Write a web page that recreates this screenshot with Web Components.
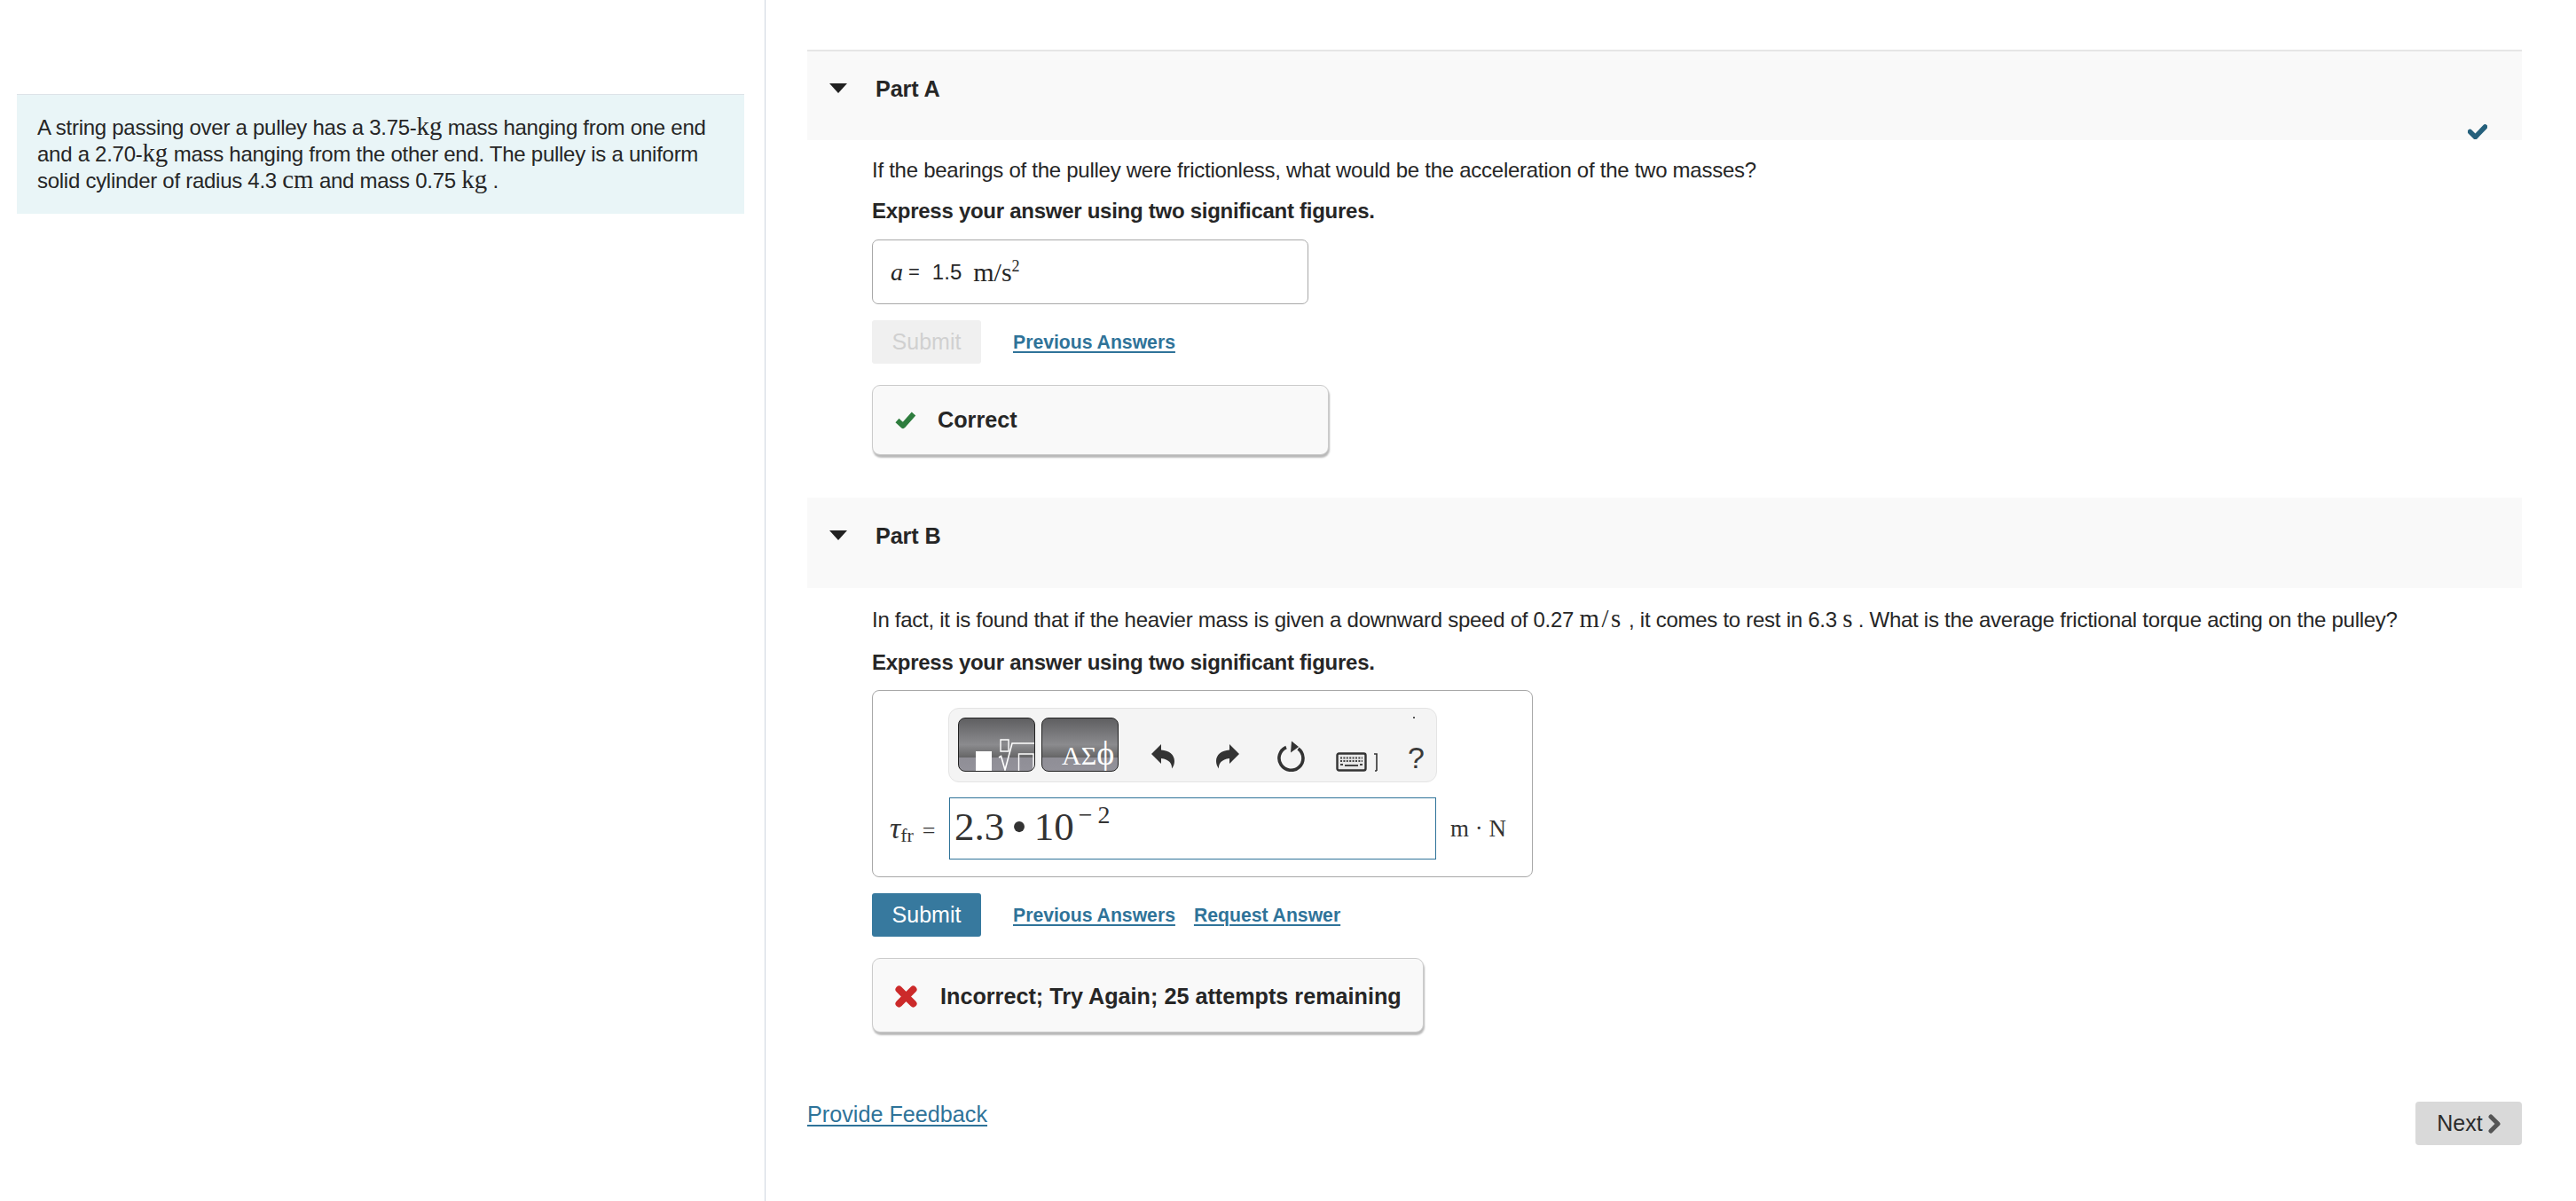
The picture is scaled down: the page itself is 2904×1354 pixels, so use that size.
<!DOCTYPE html>
<html lang="en">
<head>
<meta charset="utf-8">
<title>Part A and Part B</title>
<style>
  html, body { margin: 0; background: #fff; }
  body { font-family: "Liberation Sans", Arial, sans-serif; font-size: 24px; color: #262626; overflow: hidden; }
  x-statement div { white-space: nowrap; }
</style>
</head>
<body>
<x-app>
  <x-statement slot="side">
    <div>A string passing over a pulley has a 3.75-<x-unit>kg</x-unit> mass hanging from one end</div>
    <div>and a 2.70-<x-unit>kg</x-unit> mass hanging from the other end. The pulley is a uniform</div>
    <div>solid cylinder of radius 4.3 <x-unit>cm</x-unit> and mass 0.75 <x-unit>kg</x-unit> .</div>
  </x-statement>

  <x-part title="Part A" done>
    <x-question>If the bearings of the pulley were frictionless, what would be the acceleration of the two masses?</x-question>
    <x-answer-box></x-answer-box>
    <x-actions disabled></x-actions>
    <x-feedback kind="correct" style="width:515px">Correct</x-feedback>
  </x-part>

  <x-part title="Part B" style="margin-top:48px">
    <x-question style="margin-top:1px;--hint-gap:19px">In fact, it is found that if the heavier mass is given a downward speed of 0.27 <x-unit style="letter-spacing:2.5px">m/s</x-unit> , it comes to rest in 6.3 <x-unit>s</x-unit> . What is the average frictional torque acting on the pulley?</x-question>
    <x-math-editor></x-math-editor>
    <x-actions request></x-actions>
    <x-feedback kind="incorrect" style="width:622px;height:84px;padding-top:2px">Incorrect; Try Again; 25 attempts remaining</x-feedback>
  </x-part>

  <x-footer></x-footer>
</x-app>

<script>
class App extends HTMLElement {
    connectedCallback() {
        this.attachShadow({ mode: 'open' }).innerHTML = `
            <style>
                :host { display: grid; grid-template-columns: 863px 1fr; height: 1354px; }
                .side { border-right: 1px solid #cfd6e0; padding: 106px 23px 0 19px; }
                .main { padding: 56px 61px 0 47px; min-width: 0; }
            </style>
            <div class="side"><slot name="side"></slot></div>
            <div class="main"><slot></slot></div>`;
    }
}

class Statement extends HTMLElement {
    connectedCallback() {
        this.attachShadow({ mode: 'open' }).innerHTML = `
            <style>
                :host {
                    display: block;
                    box-sizing: border-box;
                    height: 135px;
                    background: #e9f5f7;
                    border-top: 1px solid #dde3e8;
                    padding: 21px 30px 0 23px;
                    font-size: 24px;
                    line-height: 29px;
                    letter-spacing: -0.27px;
                }
            </style>
            <slot></slot>`;
    }
}

class Unit extends HTMLElement {
    connectedCallback() {
        this.attachShadow({ mode: 'open' }).innerHTML = `<style>
                :host { display: inline; font-family: "Liberation Serif", "DejaVu Serif", serif; font-size: 1.2em; line-height: 1; letter-spacing: 0; }
            </style><slot></slot>`;
    }
}

class Part extends HTMLElement {
    connectedCallback() {
        const check = this.hasAttribute('done') ? `
            <svg class="check" width="22" height="17" viewBox="0 0 22 17"><path d="M2.5 8.5 L8.5 14.5 L19.5 3" fill="none" stroke="#25607c" stroke-width="5.5" stroke-linejoin="round" stroke-linecap="round"/></svg>` : '';
        this.attachShadow({ mode: 'open' }).innerHTML = `
            <style>
                :host { display: block; position: relative; }
                header {
                    display: flex;
                    align-items: center;
                    height: 102px;
                    box-sizing: border-box;
                    background: #f9f9f9;
                    padding: 0 0 16px 25px;
                    font-weight: 700;
                    font-size: 25.2px;
                    letter-spacing: -0.1px;
                }
                :host([done]) header { border-top: 2px solid #e6e6e6; }
                .tri { width: 0; height: 0; border-left: 10px solid transparent; border-right: 10px solid transparent; border-top: 11px solid #212121; margin: 0 32px 2px 0; }
                .check { position: absolute; left: 1872px; top: 84px; }
                .body { padding: 19px 0 0 73px; }
            </style>
            <header><span class="tri"></span><span>${this.getAttribute('title')}</span></header>
            ${check}
            <div class="body"><slot></slot></div>`;
    }
}

class Question extends HTMLElement {
    connectedCallback() {
        this.attachShadow({ mode: 'open' }).innerHTML = `
            <style>
                :host { display: block; font-size: 24px; line-height: 30px; white-space: nowrap; letter-spacing: -0.27px; }
                p { margin: 0; height: 30px; }
                .hint { font-weight: 700; margin-top: var(--hint-gap, 16px); }
            </style>
            <p><slot></slot></p>
            <p class="hint">Express your answer using two significant figures.</p>`;
    }
}

class AnswerBox extends HTMLElement {
    connectedCallback() {
        this.attachShadow({ mode: 'open' }).innerHTML = `
            <style>
                :host {
                    display: flex;
                    align-items: center;
                    box-sizing: border-box;
                    width: 492px;
                    height: 73px;
                    margin-top: 17px;
                    border: 1px solid #a8a8a8;
                    border-radius: 7px;
                    padding: 0 0 0 20px;
                    font-size: 24px;
                    white-space: nowrap;
                }
                i { font-family: "Liberation Serif", serif; font-size: 28px; }
                .eq { margin: 0 14px 0 6px; font-size: 22px; }
                .u { font-family: "Liberation Serif", serif; font-size: 30px; margin-left: 13px; }
                sup { font-size: 18px; line-height: 0; }
            </style>
            <i>a</i><span class="eq">=</span><span>1.5</span><span class="u">m/s<sup>2</sup></span>`;
    }
}

class Actions extends HTMLElement {
    connectedCallback() {
        const off = this.hasAttribute('disabled');
        const req = this.hasAttribute('request') ? '<a class="req" href="#">Request Answer</a>' : '';
        this.attachShadow({ mode: 'open' }).innerHTML = `
            <style>
                :host { display: flex; align-items: center; margin-top: 18px; }
                button {
                    width: 123px;
                    height: 49px;
                    border: 0;
                    border-radius: 3px;
                    background: #37799e;
                    color: #fff;
                    font: 25px "Liberation Sans", Arial, sans-serif;
                    padding: 0;
                }
                button[disabled] { background: #f0f0f0; color: #d0d0d0; }
                a { color: #2f7399; font-size: 21.2px; font-weight: 700; margin-left: 36px; text-underline-offset: 3px; text-decoration-thickness: 2px; }
                a.req { margin-left: 21px; }
            </style>
            <button ${off ? 'disabled' : ''}>Submit</button>
            <a href="#">Previous Answers</a>${req}`;
    }
}

class Feedback extends HTMLElement {
    connectedCallback() {
        const good = this.getAttribute('kind') === 'correct';
        const icon = good
            ? `<svg width="24" height="21" viewBox="0 0 24 21" style="margin-right:24px"><path d="M2.5 11 L9 17 L21 3.5" fill="none" stroke="#2e7d3e" stroke-width="6" stroke-linejoin="round"/></svg>`
            : `<svg width="25" height="25" viewBox="0 0 25 25" style="margin-right:26px"><path d="M4.5 4.5 L20.5 20.5 M20.5 4.5 L4.5 20.5" fill="none" stroke="#cc2a2a" stroke-width="8" stroke-linecap="round"/></svg>`;
        this.attachShadow({ mode: 'open' }).innerHTML = `
            <style>
                :host {
                    display: flex;
                    align-items: center;
                    box-sizing: border-box;
                    height: 79px;
                    margin-top: 24px;
                    padding-left: 25px;
                    background: #f9f9f9;
                    border: 1px solid #cbcbcb;
                    border-radius: 9px;
                    box-shadow: 1px 3px 2px #b9b9b9;
                    font-weight: 700;
                    font-size: 25.2px;
                    white-space: nowrap;
                }
            </style>
            ${icon}<slot></slot>`;
    }
}

class MathEditor extends HTMLElement {
    connectedCallback() {
        this.attachShadow({ mode: 'open' }).innerHTML = `
            <style>
                :host {
                    display: block;
                    box-sizing: border-box;
                    width: 745px;
                    height: 211px;
                    margin-top: 16px;
                    border: 1px solid #a8a8a8;
                    border-radius: 8px;
                    padding: 19px 0 0 85px;
                }
                .row { display: flex; align-items: center; margin: 17px 0 0 -85px; white-space: nowrap; }
                .label { width: 86px; box-sizing: border-box; padding-left: 19px; font-family: "Liberation Serif", serif; color: #333; font-size: 26px; }
                .label i { font-size: 34px; }
                .label sub { font-size: 22px; line-height: 0; vertical-align: -4px; margin-right: 10px; }
                .input {
                    box-sizing: border-box;
                    width: 549px;
                    height: 70px;
                    border: 1px solid #2f7399;
                    padding: 0 0 4px 5px;
                    display: flex;
                    align-items: center;
                    font-family: "Liberation Serif", serif;
                    color: #333;
                    font-size: 45px;
                }
                .input .dot { margin: 0 8px; font-size: 50px; line-height: 1; }
                .input .exp { font-size: 28px; align-self: flex-start; margin: 3px 0 0 5px; word-spacing: -1px; }
                .unit { margin-left: 16px; font-family: "Liberation Serif", serif; color: #333; font-size: 27px; }
            </style>
            <x-toolbar></x-toolbar>
            <div class="row">
                <span class="label"><i>τ</i><sub>fr</sub>=</span>
                <div class="input"><span>2.3</span><span class="dot">•</span><span>10</span><span class="exp">− 2</span></div>
                <span class="unit">m · N</span>
            </div>`;
    }
}

class Toolbar extends HTMLElement {
    connectedCallback() {
        this.attachShadow({ mode: 'open' }).innerHTML = `
            <style>
                :host {
                    display: flex;
                    align-items: flex-end;
                    box-sizing: border-box;
                    width: 551px;
                    height: 84px;
                    padding: 0 0 11px 10px;
                    background: #f4f4f4;
                    border: 1px solid #e4e4e4;
                    border-radius: 12px;
                    position: relative;
                    color: #333;
                }
                .tpl {
                    box-sizing: border-box;
                    width: 87px;
                    height: 61px;
                    margin-right: 7px;
                    border: 1px solid #222;
                    border-radius: 8px;
                    overflow: hidden;
                    background: linear-gradient(#5f5f61 0, #8b8b8e 50%, #666667 74%, #8f8e96 75%, #93929a 100%);
                }
                .tpl svg { display: block; }
                .undo { margin: 0 0 3px 30px; }
                .redo { margin: 0 0 3px 47px; }
                .reload { margin: 0 0 0 42px; }
                .keys { margin: 0 0 0 35px; }
                .help { font: 34px/34px "Liberation Sans", Arial, sans-serif; margin: 0 0 -1px 33px; color: #3a3a3a; }
                .speck { position: absolute; left: 523px; top: 9px; width: 2px; height: 2px; background: #555; }
            </style>
            <div class="tpl">
                <svg width="85" height="59" viewBox="0 0 85 59">
                    <rect x="19" y="37" width="18" height="22" fill="#fff"/>
                    <path d="M47 24 h9 v13 h-9 Z" fill="none" stroke="#fff" stroke-width="1.4"/>
                    <path d="M45 44 l2.5 -1.5 L52 58 L60 28 H85" fill="none" stroke="#fff" stroke-width="1.6"/>
                    <path d="M67.5 60 V40 H84 V60" fill="none" stroke="#fff" stroke-width="1.4"/>
                </svg>
            </div>
            <div class="tpl">
                <svg width="85" height="59" viewBox="0 0 85 59">
                    <text x="22" y="52" fill="#fff" font-family="Liberation Serif, serif" font-size="30">ΑΣ<tspan font-size="38">ϕ</tspan></text>
                </svg>
            </div>
            <svg class="undo" width="26" height="29" viewBox="0 0 26 29"><path d="M0 12 L11 1 V7.5 C20 8 26 13 26 20 C26 23 25 26 23 28.5 C23.5 23 20 18 11 17 V23 Z" fill="#333"/></svg>
            <svg class="redo" width="26" height="29" viewBox="0 0 26 29"><path d="M26 12 L15 1 V7.5 C6 8 0 13 0 20 C0 23 1 26 3 28.5 C2.5 23 6 18 15 17 V23 Z" fill="#333"/></svg>
            <svg class="reload" width="32" height="35" viewBox="0 0 32 35">
                <path d="M11 7.5 A13.5 13.5 0 1 0 24.5 9" fill="none" stroke="#333" stroke-width="3.6"/>
                <path d="M17 0.5 L25 7 L16 13.5 Z" fill="#333"/>
            </svg>
            <svg class="keys" width="48" height="22" viewBox="0 0 48 22">
                <rect x="1.5" y="1.5" width="32" height="19" rx="2" fill="#e8e8e8" stroke="#333" stroke-width="2.4"/>
                <path d="M5 6.5 H30 M5 10 H30" stroke="#444" stroke-width="2" stroke-dasharray="2 1.4"/>
                <path d="M5 14 H8 M27 14 H30 M10 15 H25" stroke="#444" stroke-width="2"/>
                <path d="M43 2 H46 V21 M46 21 H44" fill="none" stroke="#333" stroke-width="1.6"/>
            </svg>
            <span class="help">?</span>
            <span class="speck"></span>`;
    }
}

class Footer extends HTMLElement {
    connectedCallback() {
        this.attachShadow({ mode: 'open' }).innerHTML = `
            <style>
                :host { display: flex; justify-content: space-between; align-items: flex-start; margin-top: 78px; }
                a { color: #2f7399; font-size: 25.2px; line-height: 30px; margin-top: -1px; text-underline-offset: 3px; }
                button {
                    display: flex;
                    align-items: center;
                    justify-content: center;
                    gap: 6px;
                    width: 120px;
                    height: 49px;
                    border: 0;
                    border-radius: 4px;
                    background: #d9d9d9;
                    color: #2b2b2b;
                    font: 25px "Liberation Sans", Arial, sans-serif;
                    padding: 0;
                }
            </style>
            <a href="#">Provide Feedback</a>
            <button>Next<svg width="14" height="22" viewBox="0 0 14 22"><path d="M3 3 L11 11 L3 19" fill="none" stroke="#555" stroke-width="5" stroke-linejoin="round" stroke-linecap="round"/></svg></button>`;
    }
}

customElements.define('x-app', App);
customElements.define('x-statement', Statement);
customElements.define('x-unit', Unit);
customElements.define('x-part', Part);
customElements.define('x-question', Question);
customElements.define('x-answer-box', AnswerBox);
customElements.define('x-actions', Actions);
customElements.define('x-feedback', Feedback);
customElements.define('x-math-editor', MathEditor);
customElements.define('x-toolbar', Toolbar);
customElements.define('x-footer', Footer);
</script>
</body>
</html>
